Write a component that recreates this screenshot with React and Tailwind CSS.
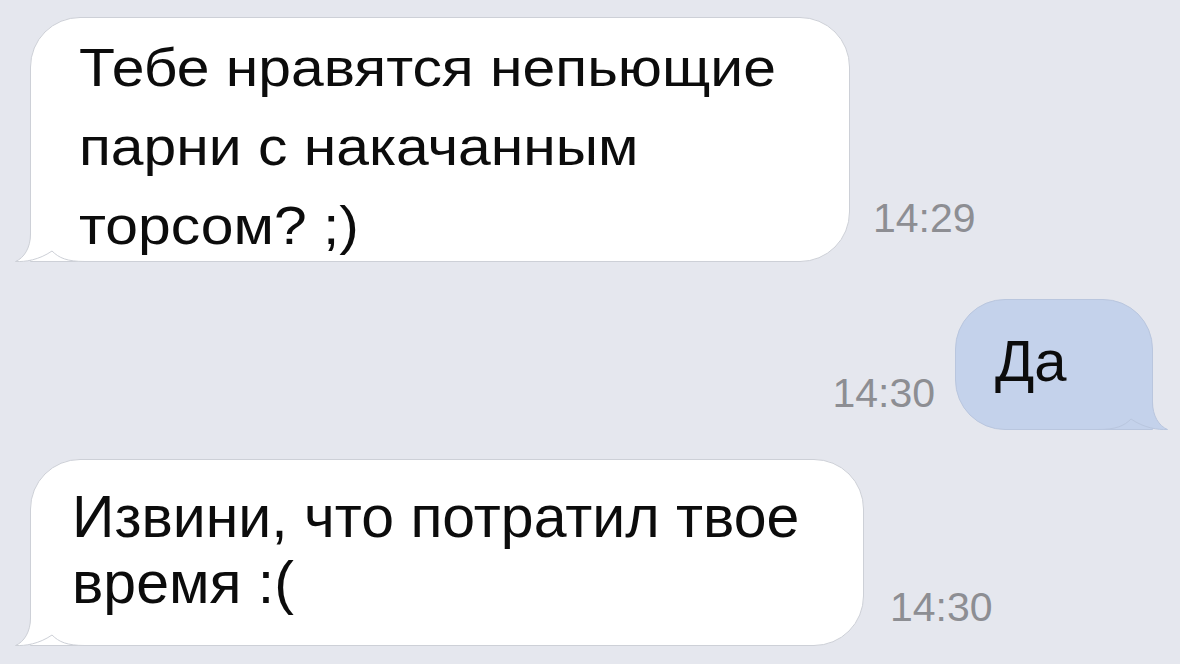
const Tail = ({ fill, stroke, flip }) => (
    <svg
        className={`absolute bottom-[-1px] ${flip ? 'right-[-16px] -scale-x-100' : 'left-[-16px]'}`}
        width="70"
        height="44"
        viewBox="0 0 70 44"
    >
        <path d="M15.5,0 L15.5,16 C15.5,30 9,40 0.5,43.5 C10,44 24,42 37,33 C44,40 52,43.5 70,43.5 L70,0 Z" fill={fill} />
        <path d="M15.5,0 L15.5,16 C15.5,30 9,40 0.5,43.5 C10,44 24,42 37,33 C44,40 52,43.5 70,43.5" fill="none" stroke={stroke} strokeWidth="1" />
    </svg>
);

const Time = ({ children, className }) => (
    <span className={`text-[41px] leading-none text-[#8d8e93] ${className}`}>{children}</span>
);

export default function App() {
    return (
        <div className="w-[1180px] h-[664px] overflow-hidden bg-[#e5e7ee] pt-[17px] font-['Liberation_Sans',Arial,sans-serif] text-[#0c0c0c]">
            {/* incoming */}
            <div className="flex items-end">
                <div className="relative ml-[30px] w-[820px] h-[245px] bg-white border border-[#cdd0d7] rounded-[50px] rounded-bl-none pl-[48px] pt-[10px]">
                    <Tail fill="#ffffff" stroke="#cdd0d7" />
                    <p className="relative origin-left scale-x-[1.11] text-[53px] leading-[79px] whitespace-nowrap">
                        Тебе нравятся непьющие<br />парни с накачанным<br />торсом? ;)
                    </p>
                </div>
                <Time className="ml-[23px] mb-[23px]">14:29</Time>
            </div>

            {/* outgoing */}
            <div className="flex items-end justify-end mt-[37px] pr-[27px]">
                <Time className="mr-[20px] mb-[16px]">14:30</Time>
                <div className="relative w-[198px] h-[131px] bg-[#c4d2eb] border border-[#b9c6de] rounded-[50px] rounded-br-none pl-[39px] pt-[32px]">
                    <Tail fill="#c4d2eb" stroke="#b9c6de" flip />
                    <p className="relative text-[58px] leading-none">Да</p>
                </div>
            </div>

            {/* incoming */}
            <div className="flex items-end mt-[29px]">
                <div className="relative ml-[30px] w-[834px] h-[187px] bg-white border border-[#cdd0d7] rounded-[50px] rounded-bl-none pl-[41px] pt-[24px]">
                    <Tail fill="#ffffff" stroke="#cdd0d7" />
                    <p className="relative text-[59px] leading-[66px] whitespace-nowrap">
                        Извини, что потратил твое<br />время :(
                    </p>
                </div>
                <Time className="ml-[26px] mb-[18px]">14:30</Time>
            </div>
        </div>
    );
}
